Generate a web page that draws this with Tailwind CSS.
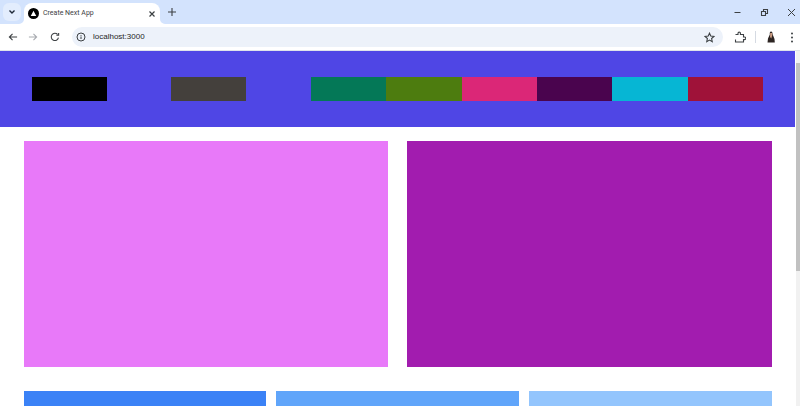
<!DOCTYPE html>
<html lang="en">
<head>
    <meta charset="UTF-8">
    <title>Create Next App</title>
    <script src="https://cdn.jsdelivr.net/npm/@tailwindcss/browser@4"></script>
</head>
<body class="h-[406px] overflow-hidden bg-white font-['Liberation_Sans',sans-serif]">
    <!-- browser chrome -->
    <div class="h-[51px] bg-white">
        <div class="flex h-[24px] items-end bg-[#d3e3fd] pl-[3px]">
            <div class="mb-[3px] flex h-[18px] w-[18px] items-center justify-center rounded-[6px] bg-[#e3edfd]">
                <svg width="8" height="8" viewBox="0 0 8 8" fill="none" stroke="#1f2937" stroke-width="1.4"><path d="M1.500 2.500 4 5 6.500 2.500"/></svg>
            </div>
            <div class="relative ml-[3px] flex h-[21px] w-[136px] items-center rounded-t-[8px] bg-white pl-[4px] pr-[5px]">
                <svg class="absolute bottom-0 left-[-5px]" width="5" height="5" viewBox="0 0 5 5" fill="#fff"><path d="M5 0V5H0A5 5 0 0 0 5 0Z"/></svg>
                <svg width="11" height="11" viewBox="0 0 12 12"><circle cx="6" cy="6" r="6" fill="#000"/><path d="M6 3 9 8.600H3Z" fill="#fff"/></svg>
                <span class="ml-[4px] flex-1 font-['Roboto',sans-serif] text-[7px] text-[#3c4043]">Create Next App</span>
                <svg width="6" height="6" viewBox="0 0 6 6" stroke="#3c4043" stroke-width="1.200"><path d="M.5 .5 5.500 5.500M5.500 .5 .5 5.500"/></svg>
                <svg class="absolute bottom-0 right-[-5px]" width="5" height="5" viewBox="0 0 5 5" fill="#fff"><path d="M0 0V5H5A5 5 0 0 1 0 0Z"/></svg>
            </div>
            <div class="mb-[3px] ml-[5px] flex h-[18px] w-[14px] items-center justify-center">
                <svg width="8" height="8" viewBox="0 0 8 8" stroke="#3c4043" stroke-width="1.100"><path d="M4 0v8M0 4h8"/></svg>
            </div>
            <div class="ml-auto flex h-full items-center gap-[18px] pr-[4px]">
                <svg width="9" height="9" viewBox="0 0 9 9" stroke="#3c4043" stroke-width="1"><path d="M1.500 4.500h6"/></svg>
                <svg width="9" height="9" viewBox="0 0 9 9" fill="none" stroke="#3c4043" stroke-width="1.100"><path d="M1.500 3.500h4v4h-4ZM3.500 3.500v-2h4v4h-2"/></svg>
                <svg width="9" height="9" viewBox="0 0 9 9" stroke="#3c4043" stroke-width="1"><path d="M1 1 8 8M8 1 1 8"/></svg>
            </div>
        </div>
        <div class="flex h-[26px] items-center pl-[8px] pr-[6px]">
            <svg width="10" height="10" viewBox="0 0 11 11" fill="none" stroke="#3c4043" stroke-width="1.200"><path d="M10 5.500H1.500M5 2 1.500 5.500 5 9"/></svg>
            <svg class="ml-[10px]" width="10" height="10" viewBox="0 0 11 11" fill="none" stroke="#a8abb0" stroke-width="1.200"><path d="M1 5.500h8.500M6 2l3.500 3.500L6 9"/></svg>
            <svg class="ml-[12px]" width="10" height="10" viewBox="0 0 11 11" fill="none" stroke="#3c4043" stroke-width="1.200"><path d="M9.300 6.300A4 4 0 1 1 8.300 2.600M9.500 1v2.500H7"/></svg>
            <div class="ml-[12px] flex h-[20px] w-[651px] items-center rounded-full bg-[#edf2fa] pl-[4px] pr-[8px]">
                <svg width="10" height="10" viewBox="0 0 10 10" fill="none" stroke="#3c4043" stroke-width="1"><circle cx="5" cy="5" r="4"/><path d="M5 4.500V7M5 3v.800"/></svg>
                <span class="ml-[7px] flex-1 text-[8px] text-[#1f1f1f]">localhost:3000</span>
                <svg width="11" height="11" viewBox="0 0 12 12" fill="none" stroke="#3c4043" stroke-width="1.200"><path d="M6 1.300 7.400 4.400 10.800 4.800 8.300 7.100 9 10.500 6 8.800 3 10.500 3.700 7.100 1.200 4.800 4.600 4.400Z"/></svg>
            </div>
            <svg class="ml-[11px]" width="12" height="12" viewBox="0 0 12 12" fill="none" stroke="#3c4043" stroke-width="1.100"><path d="M1.500 3.500H4V2.300a1.200 1.200 0 0 1 2.400 0V3.500H9.500V6h1a1.300 1.300 0 0 1 0 2.600h-1v2.400H1.500V8.500"/></svg>
            <div class="ml-[9px] h-[12px] w-px bg-[#d5dae2]"></div>
            <svg class="ml-[9px]" width="12" height="14" viewBox="0 0 12 14"><path d="M6 1.500C7.200 1.500 7.600 2.800 7.500 4L9.500 9 9.800 12.500H2.500L3 8.500 4.800 4.500C4.600 2.800 5 1.500 6 1.500Z" fill="#2d2523"/><path d="M5.200 3h2v2.500L6.300 8.500 5 7Z" fill="#c99a80"/></svg>
            <svg class="ml-[13px]" width="4" height="11" viewBox="0 0 4 11" fill="#3c4043"><circle cx="2" cy="1.500" r="1"/><circle cx="2" cy="5.500" r="1"/><circle cx="2" cy="9.500" r="1"/></svg>
        </div>
        <div class="h-px bg-[#dfe3ea]"></div>
    </div>

    <div class="flex h-[355px]">
        <!-- page -->
        <div class="w-[795px] overflow-hidden">
            <div class="flex h-[76px] items-center bg-[#4f46e5] px-8">
                <div class="h-[24px] w-[75px] bg-black"></div>
                <div class="ml-16 h-[24px] w-[75px] bg-[#44403c]"></div>
                <div class="ml-[65px] flex h-[24px] w-[452px]">
                    <div class="flex-1 bg-[#047857]"></div>
                    <div class="flex-1 bg-[#4d7c0f]"></div>
                    <div class="flex-1 bg-[#db2777]"></div>
                    <div class="flex-1 bg-[#4a044e]"></div>
                    <div class="flex-1 bg-[#06b6d4]"></div>
                    <div class="flex-1 bg-[#9f1239]"></div>
                </div>
            </div>
            <div class="mt-[14px] flex gap-[19px] pl-6">
                <div class="h-[226px] w-[364px] bg-[#e879f9]"></div>
                <div class="h-[226px] w-[365px] bg-[#a21caf]"></div>
            </div>
            <div class="mt-[24px] flex gap-[10px] pl-6">
                <div class="h-[40px] w-[242px] bg-[#3b82f6]"></div>
                <div class="h-[40px] w-[243px] bg-[#60a5fa]"></div>
                <div class="h-[40px] w-[243px] bg-[#93c5fd]"></div>
            </div>
        </div>
        <!-- scrollbar -->
        <div class="ml-px w-[4px] bg-[#f1f1f1] pt-[12px]">
            <div class="h-[208px] bg-[#c1c1c1]"></div>
        </div>
    </div>
</body>
</html>
